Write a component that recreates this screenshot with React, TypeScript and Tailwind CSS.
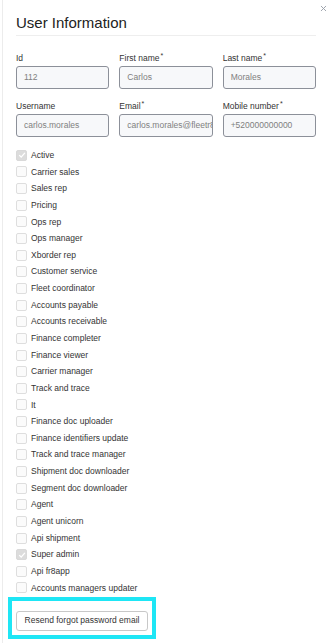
import { X } from 'lucide-react';

const roles: { name: string; checked?: boolean }[] = [
  { name: 'Active', checked: true },
  { name: 'Carrier sales' },
  { name: 'Sales rep' },
  { name: 'Pricing' },
  { name: 'Ops rep' },
  { name: 'Ops manager' },
  { name: 'Xborder rep' },
  { name: 'Customer service' },
  { name: 'Fleet coordinator' },
  { name: 'Accounts payable' },
  { name: 'Accounts receivable' },
  { name: 'Finance completer' },
  { name: 'Finance viewer' },
  { name: 'Carrier manager' },
  { name: 'Track and trace' },
  { name: 'It' },
  { name: 'Finance doc uploader' },
  { name: 'Finance identifiers update' },
  { name: 'Track and trace manager' },
  { name: 'Shipment doc downloader' },
  { name: 'Segment doc downloader' },
  { name: 'Agent' },
  { name: 'Agent unicorn' },
  { name: 'Api shipment' },
  { name: 'Super admin', checked: true },
  { name: 'Api fr8app' },
  { name: 'Accounts managers updater' },
];

function Field({ label, value, required }: { label: string; value: string; required?: boolean }) {
  return (
    <div className="flex min-w-0 flex-col">
      <div className="h-[14px] text-[8.5px] leading-[14px] text-[#333]">
        {label}
        {required && <sup className="ml-[1px] text-[7px] top-[-3px]">*</sup>}
      </div>
      <div className="mt-[1px] flex h-[23px] items-center overflow-hidden whitespace-nowrap rounded-[3px] border border-[#8c9099] bg-[#f7f8fa] px-[7px] text-[8.5px] text-[#808080]">
        {value}
      </div>
    </div>
  );
}

function Check({ checked }: { checked?: boolean }) {
  if (checked) {
    return (
      <span className="flex h-[11px] w-[11px] flex-none items-center justify-center rounded-[2px] border border-[#d9d9d9] bg-[#dcdcdc]">
        <svg width="8" height="8" viewBox="0 0 10 10" fill="none" stroke="#fff" strokeWidth="1.6">
          <path d="M1.5 5.2 4 7.6 8.6 2.4" />
        </svg>
      </span>
    );
  }
  return <span className="h-[11px] w-[11px] flex-none rounded-[2px] border border-[#dedede] bg-[#fbfbfb]" />;
}

export default function App() {
  return (
    <div className="relative min-h-[643px] w-[336px] bg-white font-['Liberation_Sans',Arial,sans-serif]">
      <div className="absolute left-[2px] top-0 h-[643px] w-px bg-[#ececec]" />
      <button className="absolute right-[8px] top-[4px] text-[#9aa0aa]" aria-label="Close">
        <X size={9} strokeWidth={2.5} />
      </button>

      <div className="w-[316px] pl-4">
        <h1 className="pt-[13px] text-[15px] leading-[20px] text-[#222]">User Information</h1>
        <div className="mt-[2px] h-px bg-[#eeeeee]" />

        <div className="mt-[15px] grid grid-cols-3 gap-x-[10px] gap-y-[10px]">
          <Field label="Id" value="112" />
          <Field label="First name" value="Carlos" required />
          <Field label="Last name" value="Morales" required />
          <Field label="Username" value="carlos.morales" />
          <Field label="Email" value="carlos.morales@fleetr8" required />
          <Field label="Mobile number" value="+520000000000" required />
        </div>

        <div className="mt-[10px] flex flex-col">
          {roles.map((r) => (
            <label key={r.name} className="flex h-[16.65px] items-center gap-[4px] text-[8.5px] text-[#333]">
              <Check checked={r.checked} />
              <span>{r.name}</span>
            </label>
          ))}
        </div>
      </div>

      <div className="ml-[8px] mt-[1px] w-[148px] border-[4px] border-[#1ee6f5] px-[4px] pb-[4px] pt-[5px]">
        <button className="h-[20px] w-full rounded-[3px] border border-[#c8c8c8] bg-white text-[8.5px] text-[#333]">
          Resend forgot password email
        </button>
      </div>
    </div>
  );
}
